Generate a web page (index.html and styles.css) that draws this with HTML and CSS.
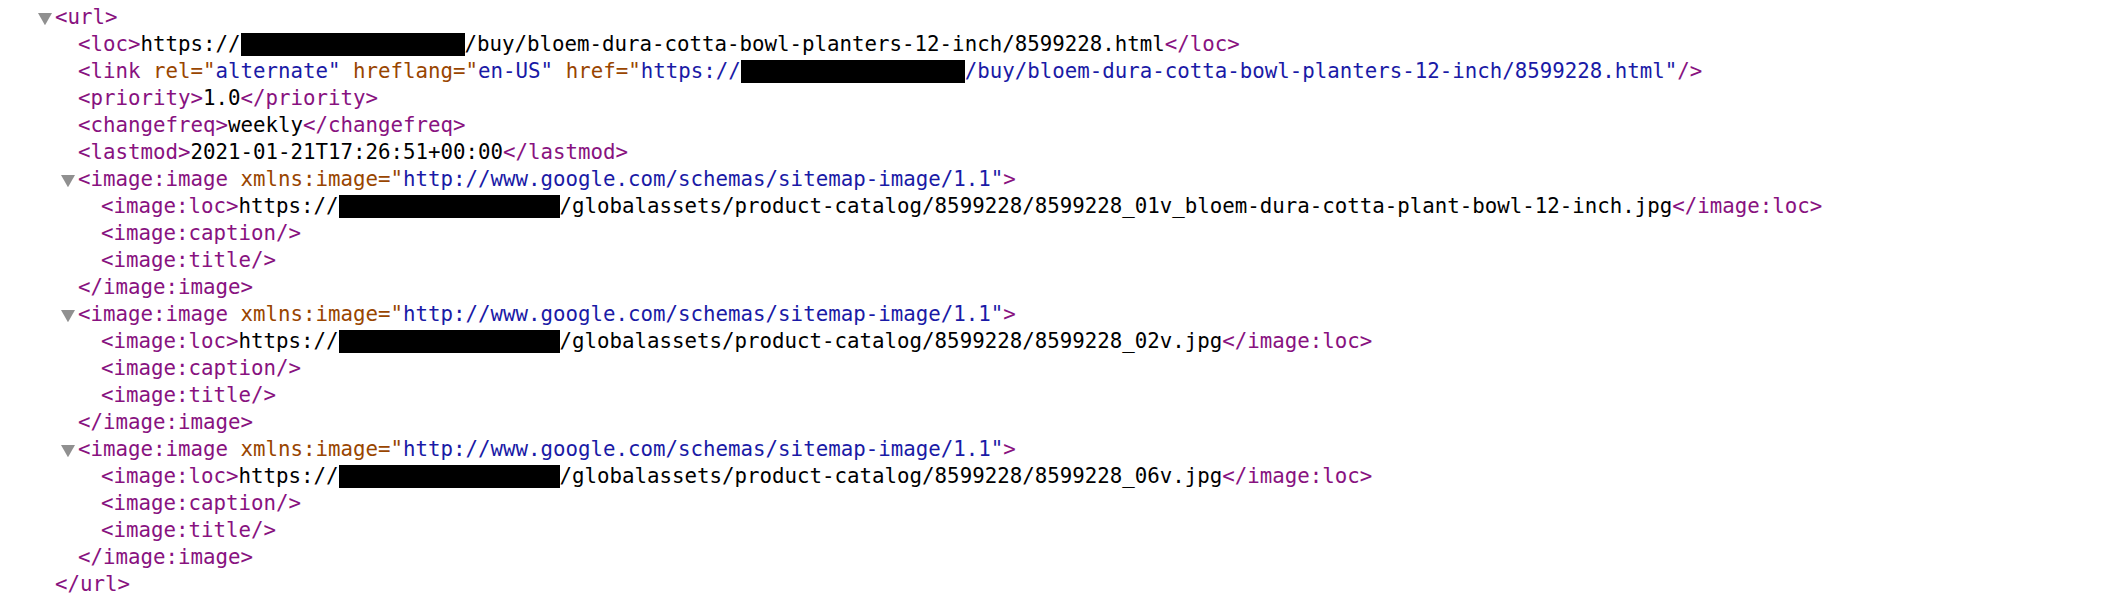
FILE: index.html
```html
<!DOCTYPE html>
<html lang="en">
<head>
    <meta charset="UTF-8">
    <title>sitemap.xml</title>
    <link rel="stylesheet" href="styles.css">
</head>
<body>
    <div class="viewer">
        <!-- url entry -->
        <div class="node">
            <div class="line"><span class="toggle"><svg viewBox="0 0 8 7"><path d="M0 0 L8 0 L4 7 Z"/></svg></span><span class="tag">&lt;url&gt;</span></div>
            <div class="children">
                <div class="line"><span class="tag">&lt;loc&gt;</span>https://<span class="redact"></span>/buy/bloem-dura-cotta-bowl-planters-12-inch/8599228.html<span class="tag">&lt;/loc&gt;</span></div>
                <div class="line"><span class="tag">&lt;link <span class="attr">rel="</span><span class="val">alternate"</span> <span class="attr">hreflang="</span><span class="val">en-US"</span> <span class="attr">href="</span><span class="val">https://<span class="redact"></span>/buy/bloem-dura-cotta-bowl-planters-12-inch/8599228.html"</span>/&gt;</span></div>
                <div class="line"><span class="tag">&lt;priority&gt;</span>1.0<span class="tag">&lt;/priority&gt;</span></div>
                <div class="line"><span class="tag">&lt;changefreq&gt;</span>weekly<span class="tag">&lt;/changefreq&gt;</span></div>
                <div class="line"><span class="tag">&lt;lastmod&gt;</span>2021-01-21T17:26:51+00:00<span class="tag">&lt;/lastmod&gt;</span></div>

                <div class="node">
                    <div class="line"><span class="toggle"><svg viewBox="0 0 8 7"><path d="M0 0 L8 0 L4 7 Z"/></svg></span><span class="tag">&lt;image:image <span class="attr">xmlns:image="</span><span class="val">http://www.google.com/schemas/sitemap-image/1.1"</span>&gt;</span></div>
                    <div class="children">
                        <div class="line"><span class="tag">&lt;image:loc&gt;</span>https://<span class="redact short"></span>/globalassets/product-catalog/8599228/8599228_01v_bloem-dura-cotta-plant-bowl-12-inch.jpg<span class="tag">&lt;/image:loc&gt;</span></div>
                        <div class="line"><span class="tag">&lt;image:caption/&gt;</span></div>
                        <div class="line"><span class="tag">&lt;image:title/&gt;</span></div>
                    </div>
                    <div class="line"><span class="tag">&lt;/image:image&gt;</span></div>
                </div>

                <div class="node">
                    <div class="line"><span class="toggle"><svg viewBox="0 0 8 7"><path d="M0 0 L8 0 L4 7 Z"/></svg></span><span class="tag">&lt;image:image <span class="attr">xmlns:image="</span><span class="val">http://www.google.com/schemas/sitemap-image/1.1"</span>&gt;</span></div>
                    <div class="children">
                        <div class="line"><span class="tag">&lt;image:loc&gt;</span>https://<span class="redact short"></span>/globalassets/product-catalog/8599228/8599228_02v.jpg<span class="tag">&lt;/image:loc&gt;</span></div>
                        <div class="line"><span class="tag">&lt;image:caption/&gt;</span></div>
                        <div class="line"><span class="tag">&lt;image:title/&gt;</span></div>
                    </div>
                    <div class="line"><span class="tag">&lt;/image:image&gt;</span></div>
                </div>

                <div class="node">
                    <div class="line"><span class="toggle"><svg viewBox="0 0 8 7"><path d="M0 0 L8 0 L4 7 Z"/></svg></span><span class="tag">&lt;image:image <span class="attr">xmlns:image="</span><span class="val">http://www.google.com/schemas/sitemap-image/1.1"</span>&gt;</span></div>
                    <div class="children">
                        <div class="line"><span class="tag">&lt;image:loc&gt;</span>https://<span class="redact short"></span>/globalassets/product-catalog/8599228/8599228_06v.jpg<span class="tag">&lt;/image:loc&gt;</span></div>
                        <div class="line"><span class="tag">&lt;image:caption/&gt;</span></div>
                        <div class="line"><span class="tag">&lt;image:title/&gt;</span></div>
                    </div>
                    <div class="line"><span class="tag">&lt;/image:image&gt;</span></div>
                </div>
            </div>
            <div class="line"><span class="tag">&lt;/url&gt;</span></div>
        </div>
    </div>
</body>
</html>
```

FILE: styles.css
```css
/* Reset */
* {
    margin: 0;
    padding: 0;
    box-sizing: border-box;
}
body {
    background: #fff;
    color: #000;
    font-family: "DejaVu Sans Mono", "Liberation Mono", monospace;
    font-size: 20.78px;
    overflow: hidden;
}

/* Tree container */
.viewer {
    padding: 4px 0 0 55px;
}
.children {
    margin-left: 23px;
}
.line {
    height: 27px;
    line-height: 27px;
    white-space: pre;
}

/* Expand / collapse arrow */
.toggle {
    display: inline-block;
    width: 17.5px;
    margin-left: -17.5px;
    vertical-align: top;
}
.toggle svg {
    display: block;
    width: 14px;
    height: 12.25px;
    margin-top: 9px;
    fill: #909090;
}

/* Syntax colours */
.tag {
    color: rgb(136, 18, 128);
}
.attr {
    color: rgb(153, 69, 0);
}
.val {
    color: rgb(26, 26, 166);
}

/* Blacked out domain */
.redact {
    display: inline-block;
    width: 224px;
    height: 23px;
    margin-top: 2px;
    vertical-align: top;
    background: #000;
}
.redact.short {
    width: 221px;
}
```
